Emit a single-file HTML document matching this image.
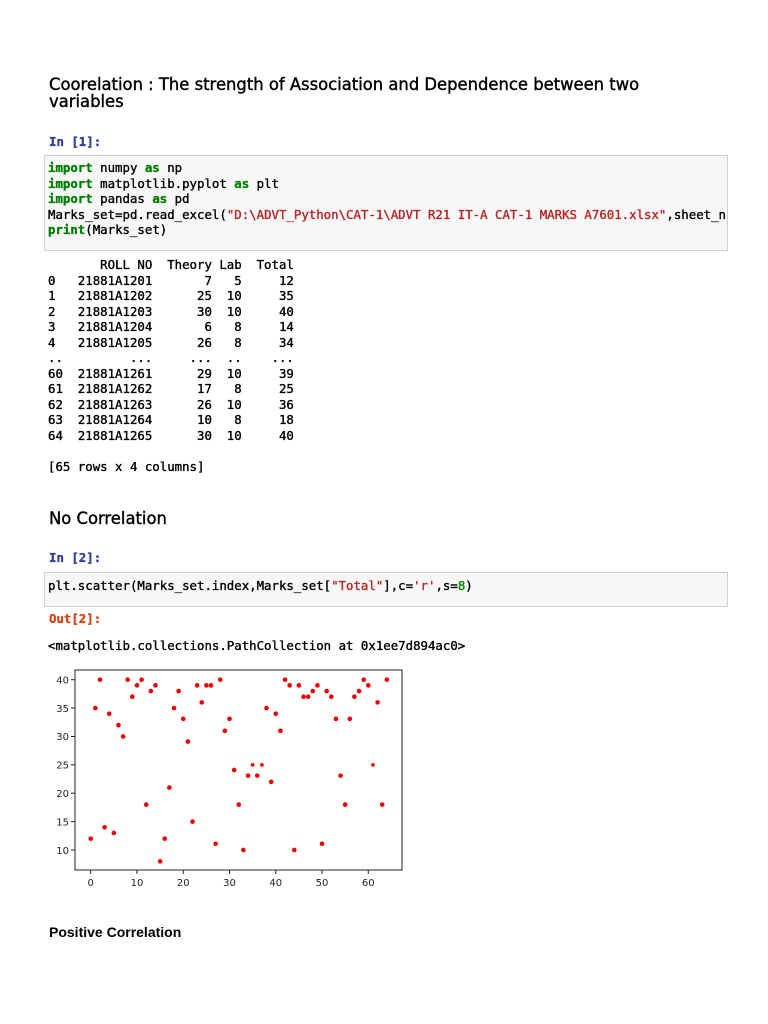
<!DOCTYPE html>
<html><head><meta charset="utf-8"><style>
body{margin:0;width:768px;height:1024px;background:#fff;position:relative;font-family:"Liberation Sans",sans-serif;}
.a{position:absolute;white-space:pre;}
.t{font-family:"DejaVu Sans",sans-serif;font-size:16.4px;color:#000;-webkit-text-stroke:0.4px #000;}
.m{font-family:"DejaVu Sans Mono","Liberation Mono",monospace;font-size:12.38px;line-height:15.5px;color:#000;-webkit-text-stroke:0.35px currentColor;}
.p{color:#303f9f;font-weight:bold;}
.o{color:#d84315;font-weight:bold;}
.k{color:#008000;font-weight:bold;}
.s{color:#ba2121;}
.n{color:#080;}
.box{position:absolute;left:44px;width:682px;border:1px solid #cfcfcf;background:#f7f7f7;}
</style></head><body>
<div class="a t" style="left:49px;top:76px;line-height:17px;">Coorelation : The strength of Association and Dependence between two
variables</div>
<div class="a m p" style="left:49px;top:135px;">In [1]:</div>
<div class="box" style="top:155px;height:94px;"></div>
<div class="a m" style="left:48px;top:161px;"><span class="k">import</span> numpy <span class="k">as</span> np
<span class="k">import</span> matplotlib.pyplot <span class="k">as</span> plt
<span class="k">import</span> pandas <span class="k">as</span> pd
Marks_set=pd.read_excel(<span class="s">"D:\ADVT_Python\CAT-1\ADVT R21 IT-A CAT-1 MARKS A7601.xlsx"</span>,sheet_n
<span class="k">print</span>(Marks_set)</div>
<div class="a m" style="left:48px;top:258px;">       ROLL NO  Theory Lab  Total
0   21881A1201       7   5     12
1   21881A1202      25  10     35
2   21881A1203      30  10     40
3   21881A1204       6   8     14
4   21881A1205      26   8     34
..         ...     ...  ..    ...
60  21881A1261      29  10     39
61  21881A1262      17   8     25
62  21881A1263      26  10     36
63  21881A1264      10   8     18
64  21881A1265      30  10     40

[65 rows x 4 columns]</div>
<div class="a t" style="left:49px;top:509px;">No Correlation</div>
<div class="a m p" style="left:49px;top:551px;">In [2]:</div>
<div class="box" style="top:572px;height:33px;"></div>
<div class="a m" style="left:48px;top:579px;">plt.scatter(Marks_set.index,Marks_set[<span class="s">"Total"</span>],c=<span class="s">'r'</span>,s=<span class="n">8</span>)</div>
<div class="a m o" style="left:49px;top:612px;">Out[2]:</div>
<div class="a m" style="left:48px;top:639px;">&lt;matplotlib.collections.PathCollection at 0x1ee7d894ac0&gt;</div>
<svg class="a" style="left:0;top:0" width="768" height="1024">
<rect x="75" y="670" width="327" height="200" fill="none" stroke="#222" stroke-width="1"/>
<g font-family="DejaVu Sans,Liberation Sans,sans-serif" font-size="10" fill="#222" text-anchor="middle">
<text x="90.7" y="886">0</text><text x="137" y="886">10</text><text x="183.2" y="886">20</text><text x="229.5" y="886">30</text><text x="275.8" y="886">40</text><text x="322" y="886">50</text><text x="368.3" y="886">60</text>
</g>
<g stroke="#222"><line x1="90.7" y1="870" x2="90.7" y2="874"/><line x1="137" y1="870" x2="137" y2="874"/><line x1="183.2" y1="870" x2="183.2" y2="874"/><line x1="229.5" y1="870" x2="229.5" y2="874"/><line x1="275.8" y1="870" x2="275.8" y2="874"/><line x1="322" y1="870" x2="322" y2="874"/><line x1="368.3" y1="870" x2="368.3" y2="874"/>
<line x1="71" y1="679.7" x2="75" y2="679.7"/><line x1="71" y1="708" x2="75" y2="708"/><line x1="71" y1="736.5" x2="75" y2="736.5"/><line x1="71" y1="764.8" x2="75" y2="764.8"/><line x1="71" y1="793.2" x2="75" y2="793.2"/><line x1="71" y1="821.6" x2="75" y2="821.6"/><line x1="71" y1="850" x2="75" y2="850"/></g>
<g font-family="DejaVu Sans,Liberation Sans,sans-serif" font-size="10" fill="#222" text-anchor="end">
<text x="69" y="683.5">40</text><text x="69" y="712">35</text><text x="69" y="740">30</text><text x="69" y="768.5">25</text><text x="69" y="797">20</text><text x="69" y="825.5">15</text><text x="69" y="854">10</text>
</g>
<g transform="translate(90.7,679.7) scale(4.627,-5.677) translate(0,-40)" fill="#e00">
<ellipse cx="0" cy="12" rx=".5" ry=".41"/><ellipse cx="1" cy="35" rx=".5" ry=".41"/><ellipse cx="2" cy="40" rx=".5" ry=".41"/><ellipse cx="3" cy="14" rx=".5" ry=".41"/><ellipse cx="4" cy="34" rx=".5" ry=".41"/><ellipse cx="5" cy="13" rx=".5" ry=".41"/><ellipse cx="6" cy="32" rx=".5" ry=".41"/><ellipse cx="7" cy="30" rx=".5" ry=".41"/><ellipse cx="8" cy="40" rx=".5" ry=".41"/><ellipse cx="9" cy="37" rx=".5" ry=".41"/><ellipse cx="10" cy="39" rx=".5" ry=".41"/><ellipse cx="11" cy="40" rx=".5" ry=".41"/><ellipse cx="12" cy="18" rx=".5" ry=".41"/><ellipse cx="13" cy="38" rx=".5" ry=".41"/><ellipse cx="14" cy="39" rx=".5" ry=".41"/><ellipse cx="15" cy="8" rx=".5" ry=".41"/><ellipse cx="16" cy="12" rx=".5" ry=".41"/><ellipse cx="17" cy="21" rx=".5" ry=".41"/><ellipse cx="18" cy="35" rx=".5" ry=".41"/><ellipse cx="19" cy="38" rx=".5" ry=".41"/><ellipse cx="20" cy="33.1" rx=".5" ry=".41"/><ellipse cx="21" cy="29.1" rx=".5" ry=".41"/><ellipse cx="22" cy="15" rx=".5" ry=".41"/><ellipse cx="23" cy="39" rx=".5" ry=".41"/><ellipse cx="24" cy="36" rx=".5" ry=".41"/><ellipse cx="25" cy="39" rx=".5" ry=".41"/><ellipse cx="26" cy="39" rx=".5" ry=".41"/><ellipse cx="27" cy="11.1" rx=".5" ry=".41"/><ellipse cx="28" cy="40" rx=".5" ry=".41"/><ellipse cx="29" cy="31" rx=".5" ry=".41"/><ellipse cx="30" cy="33.1" rx=".5" ry=".41"/><ellipse cx="31" cy="24.1" rx=".5" ry=".41"/><ellipse cx="32" cy="18" rx=".5" ry=".41"/><ellipse cx="33" cy="10" rx=".5" ry=".41"/><ellipse cx="34" cy="23.1" rx=".5" ry=".41"/><ellipse cx="35" cy="25" rx=".4" ry=".33"/><ellipse cx="36" cy="23.1" rx=".5" ry=".41"/><ellipse cx="37" cy="25" rx=".4" ry=".33"/><ellipse cx="38" cy="35" rx=".5" ry=".41"/><ellipse cx="39" cy="22" rx=".5" ry=".41"/><ellipse cx="40" cy="34" rx=".5" ry=".41"/><ellipse cx="41" cy="31" rx=".5" ry=".41"/><ellipse cx="42" cy="40" rx=".5" ry=".41"/><ellipse cx="43" cy="39" rx=".5" ry=".41"/><ellipse cx="44" cy="10" rx=".5" ry=".41"/><ellipse cx="45" cy="39" rx=".5" ry=".41"/><ellipse cx="46" cy="37" rx=".5" ry=".41"/><ellipse cx="47" cy="37" rx=".5" ry=".41"/><ellipse cx="48" cy="38" rx=".5" ry=".41"/><ellipse cx="49" cy="39" rx=".5" ry=".41"/><ellipse cx="50" cy="11.1" rx=".5" ry=".41"/><ellipse cx="51" cy="38" rx=".5" ry=".41"/><ellipse cx="52" cy="37" rx=".5" ry=".41"/><ellipse cx="53" cy="33.1" rx=".5" ry=".41"/><ellipse cx="54" cy="23.1" rx=".5" ry=".41"/><ellipse cx="55" cy="18" rx=".5" ry=".41"/><ellipse cx="56" cy="33.1" rx=".5" ry=".41"/><ellipse cx="57" cy="37" rx=".5" ry=".41"/><ellipse cx="58" cy="38" rx=".5" ry=".41"/><ellipse cx="59" cy="40" rx=".5" ry=".41"/><ellipse cx="60" cy="39" rx=".5" ry=".41"/><ellipse cx="61" cy="25" rx=".4" ry=".33"/><ellipse cx="62" cy="36" rx=".5" ry=".41"/><ellipse cx="63" cy="18" rx=".5" ry=".41"/><ellipse cx="64" cy="40" rx=".5" ry=".41"/>
</g>
</svg>
<div class="a" style="left:49px;top:924px;font-size:14px;font-weight:bold;">Positive Correlation</div>
</body></html>
